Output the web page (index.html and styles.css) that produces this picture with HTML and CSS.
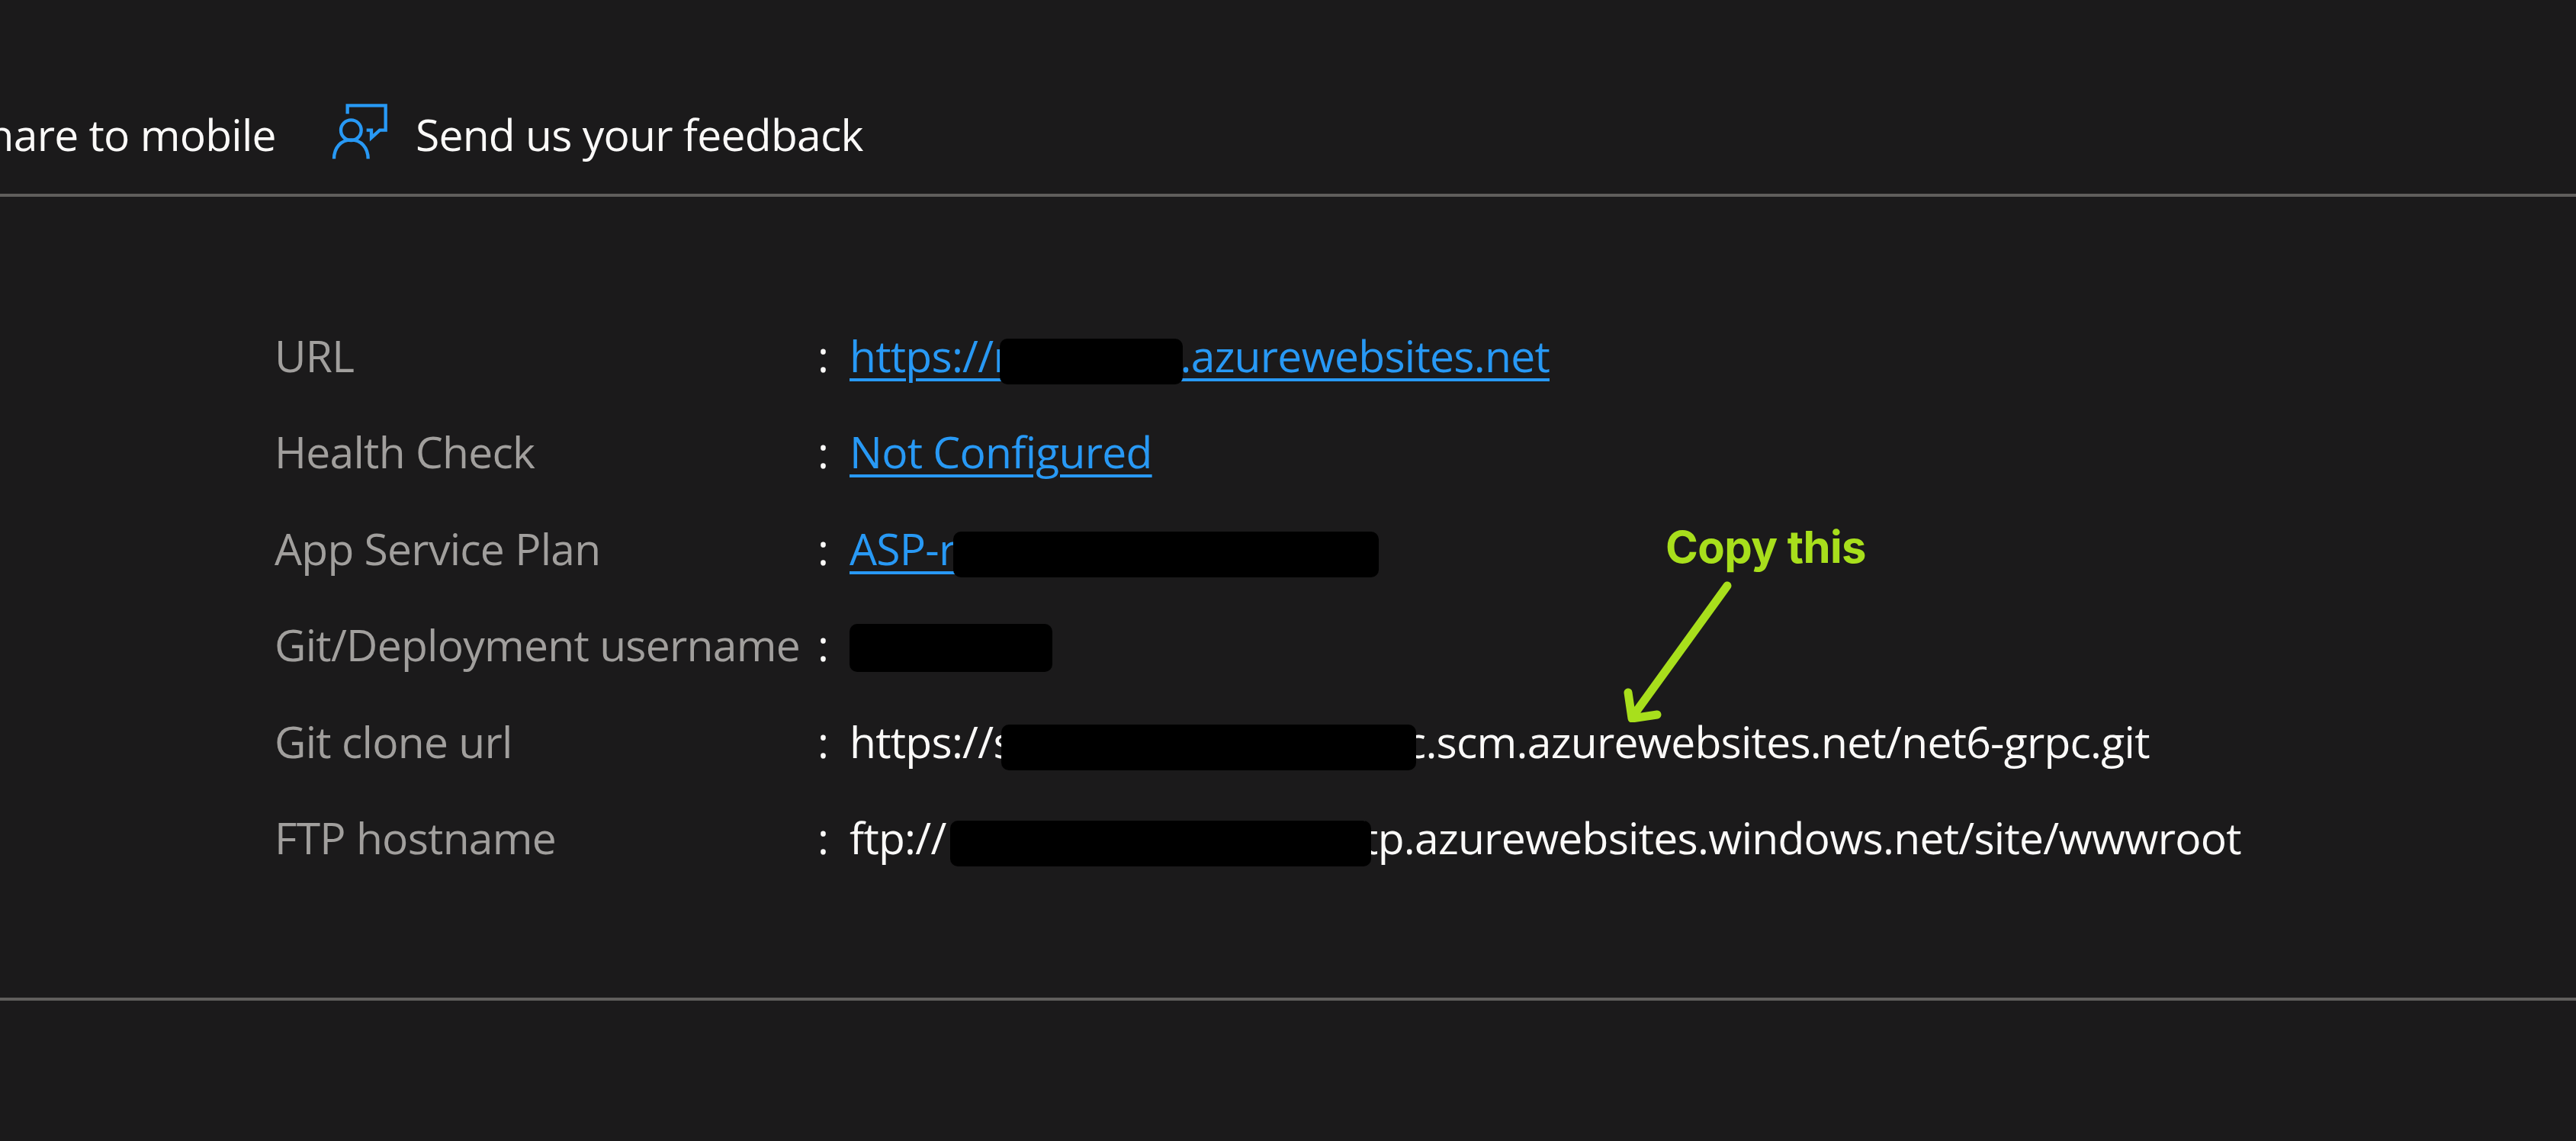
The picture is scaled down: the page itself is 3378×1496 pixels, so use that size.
FILE: index.html
```html
<!DOCTYPE html>
<html lang="en">
<head>
<meta charset="utf-8">
<title>App Service overview</title>
<link rel="stylesheet" href="styles.css">
</head>
<body>
<div class="page">
  <header class="toolbar">
    <span class="tool tool-share">Share to mobile</span>
    <svg class="tool-icon" viewBox="75 15 225 225" aria-hidden="true">
      <path class="icon-line" d="M137 58V25H287V122H264L231 152V122H212"/>
      <circle class="icon-line" cx="151" cy="122" r="40"/>
      <path class="icon-line" d="M84 235C84 190 112 160 151 160C190 160 218 190 218 235"/>
    </svg>
    <span class="tool">Send us your feedback</span>
  </header>
  <main class="essentials">
    <div class="label">URL</div><div class="colon">:</div>
    <div class="value"><a href="#">https://r<span class="redact redact-url"></span>c.azurewebsites.net</a></div>
    <div class="label">Health Check</div><div class="colon">:</div>
    <div class="value"><a href="#">Not Configured</a></div>
    <div class="label">App Service Plan</div><div class="colon">:</div>
    <div class="value"><a href="#">ASP-r<span class="redact redact-plan"></span></a></div>
    <div class="label">Git/Deployment username</div><div class="colon">:</div>
    <div class="value"><span class="redact redact-user"></span></div>
    <div class="label">Git clone url</div><div class="colon">:</div>
    <div class="value">https://s<span class="redact redact-git"></span>c.scm.azurewebsites.net/net6-grpc.git</div>
    <div class="label">FTP hostname</div><div class="colon">:</div>
    <div class="value">ftp://<span class="redact redact-ftp"></span>ftp.azurewebsites.windows.net/site/wwwroot</div>
  </main>
  <hr class="rule">
  <div class="note">Copy this</div>
  <svg class="note-arrow" viewBox="0 0 150 190" aria-hidden="true">
    <path d="M143 11L20 181M13 151L18 185L51 180"/>
  </svg>
</div>
</body>
</html>
```
FILE: styles.css
```css
* { box-sizing: border-box; }
html, body { margin: 0; height: 100%; }
body {
  background: #1b1a1b;
  color: #faf9f8;
  font-family: "Open Sans", "Noto Sans", sans-serif;
  font-size: 57px;
  letter-spacing: -0.75px;
  overflow: hidden;
}
.page { position: relative; height: 1496px; overflow: hidden; }
.toolbar {
  height: 258px;
  border-bottom: 4px solid #605e5c;
  display: flex;
  align-items: center;
  padding-top: 98px;
  margin-left: -47px;
  white-space: nowrap;
}
.tool { line-height: 80px; flex: none; }
.tool-icon {
  width: 75px; height: 75px; flex: none;
  margin: -8px 35px 0 73px;
}
.icon-line { fill: none; stroke: #2899f5; stroke-width: 13; }
.essentials {
  display: grid;
  grid-template-columns: 712px 42px 1fr;
  grid-auto-rows: 126.4px;
  padding: 168px 0 0 360px;
}
.label, .colon, .value { line-height: 80px; white-space: nowrap; }
.label { color: #a19f9d; }
.value a { color: #2899f5; text-decoration-thickness: 4px; text-underline-offset: 8px; }
.redact {
  position: relative;
  z-index: 1;
  display: inline-block;
  height: 60px;
  background: #000;
  border-radius: 10px;
  vertical-align: -16px;
}
.redact-url { width: 240px; margin: 0 -30px 0 -14px; }
.redact-plan { width: 558px; margin-left: -3px; }
.redact-user { width: 266px; height: 63px; vertical-align: -14px; }
.redact-git { width: 544px; margin: 0 -14px 0 -16px; }
.redact-ftp { width: 552px; margin: 0 -29px 0 5px; }
.rule {
  border: 0;
  height: 4px;
  background: #605e5c;
  margin: 124px 0 0;
}
.note {
  position: absolute;
  left: 2184px; top: 682px;
  color: #a8df1c;
  font-family: Inter, sans-serif;
  font-weight: 700;
  font-size: 58px;
  letter-spacing: -0.6px;
  line-height: 70px;
}
.note-arrow {
  position: absolute;
  left: 2122px; top: 757px;
  width: 150px; height: 190px;
}
.note-arrow path {
  fill: none; stroke: #a8df1c; stroke-width: 11;
  stroke-linecap: round; stroke-linejoin: round;
}
```
